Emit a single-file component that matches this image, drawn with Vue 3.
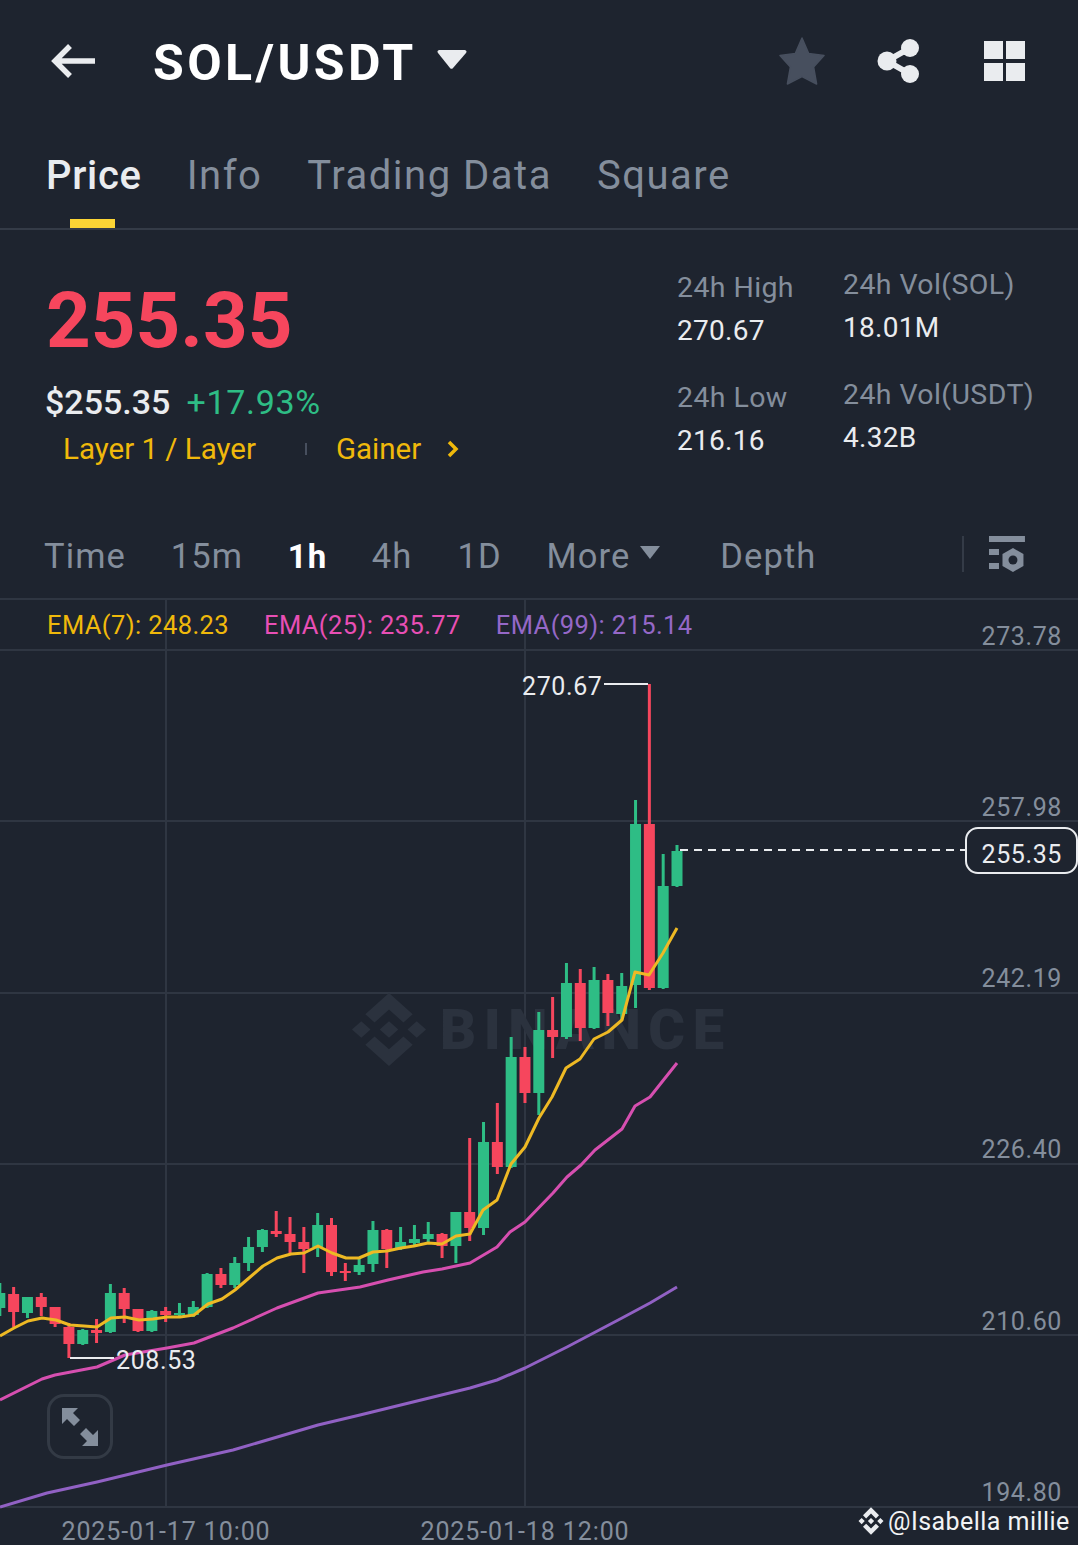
<script setup>
// candles: [high, top of body, bottom of body, low, colour], all in page pixels
const raw = [
  [1283, 1293, 1308, 1316, 'g'], [1287, 1294, 1312, 1327, 'r'], [1297, 1297, 1313, 1318, 'g'], [1293, 1297, 1307, 1316, 'r'],
  [1307, 1307, 1324, 1327, 'r'], [1323, 1327, 1344, 1358, 'r'], [1329, 1330, 1344, 1345, 'g'], [1319, 1330, 1333, 1343, 'r'],
  [1284, 1293, 1332, 1333, 'g'], [1288, 1293, 1309, 1323, 'r'], [1309, 1309, 1331, 1332, 'r'], [1310, 1311, 1331, 1332, 'g'],
  [1307, 1311, 1315, 1322, 'r'], [1303, 1313, 1315, 1318, 'g'], [1301, 1307, 1315, 1317, 'g'], [1273, 1274, 1307, 1308, 'g'],
  [1268, 1274, 1285, 1288, 'r'], [1257, 1263, 1285, 1288, 'g'], [1237, 1247, 1263, 1271, 'g'], [1229, 1230, 1247, 1252, 'g'],
  [1211, 1231, 1234, 1237, 'r'], [1217, 1234, 1242, 1253, 'r'], [1227, 1242, 1249, 1273, 'r'], [1213, 1225, 1247, 1257, 'g'],
  [1218, 1225, 1272, 1276, 'r'], [1263, 1271, 1273, 1281, 'r'], [1257, 1265, 1272, 1275, 'g'], [1221, 1230, 1264, 1272, 'g'],
  [1229, 1230, 1249, 1268, 'r'], [1227, 1242, 1248, 1250, 'g'], [1225, 1239, 1243, 1245, 'g'], [1222, 1234, 1239, 1242, 'g'],
  [1233, 1234, 1246, 1258, 'r'], [1212, 1212, 1246, 1263, 'g'], [1138, 1212, 1228, 1241, 'r'], [1122, 1142, 1228, 1235, 'g'],
  [1103, 1142, 1167, 1174, 'r'], [1037, 1057, 1167, 1168, 'g'], [1047, 1057, 1093, 1103, 'r'], [1012, 1030, 1093, 1115, 'g'],
  [997, 1030, 1037, 1058, 'r'], [963, 983, 1037, 1039, 'g'], [969, 983, 1028, 1041, 'r'], [967, 980, 1028, 1029, 'g'],
  [974, 980, 1013, 1026, 'r'], [973, 986, 1014, 1020, 'g'], [800, 824, 985, 1008, 'g'], [684, 824, 988, 990, 'r'],
  [854, 886, 988, 989, 'g'], [845, 851, 886, 887, 'g'],
]

const candles = raw.map((c, i) => ({
  x: 677 - 13.82 * (49 - i),
  high: c[0],
  top: c[1],
  bottom: c[2],
  low: c[3],
  color: c[4] === 'g' ? '#2ebd85' : '#f6465d',
}))

const ema7 = '0,1336 14,1328 28,1321 42,1318 56,1320 70,1325 84,1326 97,1327 111,1318 125,1317 139,1320 153,1319 167,1317 180,1317 194,1315 208,1304 222,1299 235,1290 249,1278 263,1266 277,1258 291,1254 304,1253 318,1246 332,1253 346,1258 359,1258 373,1252 387,1251 401,1248 414,1246 428,1243 442,1244 456,1236 470,1234 483,1210 497,1200 511,1164 525,1147 539,1118 552,1097 566,1068 580,1059 594,1039 608,1032 622,1020 635,972 649,975 663,953 677,928'
const ema25 = '0,1400 42,1379 55,1375 97,1367 125,1355 167,1348 194,1343 233,1328 277,1308 318,1293 360,1287 388,1280 423,1272 442,1269 470,1263 497,1247 510,1232 525,1222 553,1193 567,1177 581,1165 595,1150 622,1129 635,1106 650,1097 677,1063'
const ema99 = '0,1507 47,1493 97,1482 167,1465 233,1450 318,1425 360,1415 470,1388 497,1380 525,1368 567,1347 622,1318 650,1303 677,1287'

const gridY = [650, 821, 993, 1164, 1335, 1507]
const axis = [
  { y: 645, label: '273.78' },
  { y: 816, label: '257.98' },
  { y: 987, label: '242.19' },
  { y: 1158, label: '226.40' },
  { y: 1330, label: '210.60' },
  { y: 1501, label: '194.80' },
]
const logoPath = 'M12 9.5 14.5 12 12 14.5 9.5 12ZM4.5 9.5 7 12 4.5 14.5 2 12ZM19.5 9.5 22 12 19.5 14.5 17 12ZM12 1 18.4 7.4 15.9 9.9 12 6 8.1 9.9 5.6 7.4ZM12 23 18.4 16.6 15.9 14.1 12 18 8.1 14.1 5.6 16.6Z'
</script>

<template>
  <div class="page">
    <header class="top">
      <svg class="back" width="46" height="36" viewBox="0 0 46 36">
        <path d="M44 18H5M19 3 4 18l15 15" fill="none" stroke="#eaecef" stroke-width="5.5" />
      </svg>
      <span class="pair">SOL/USDT</span>
      <svg class="caret" width="30" height="22" viewBox="0 0 30 22"><path d="M2 2h26a2 2 0 0 1 1 3L16 20a2 2 0 0 1-3 0L1 5a2 2 0 0 1 1-3Z" fill="#eaecef" /></svg>
      <div class="top-icons">
        <svg class="star" width="46" height="48" viewBox="0 0 46 48"><path d="M23 1l6.6 15.4L45 18.6 34.6 30l3 17L23 39.6 8.400 47l3-17L1 18.600l15.400-2.200Z" fill="#474f5e" stroke="#474f5e" stroke-linejoin="round" stroke-width="1.500" /></svg>
        <svg class="share" width="44" height="46" viewBox="0 0 44 46">
          <path d="M33 10 10 23l23 13" fill="none" stroke="#eaecef" stroke-width="6" />
          <circle cx="33" cy="10" r="9" fill="#eaecef" /><circle cx="10" cy="23" r="9.500" fill="#eaecef" /><circle cx="33" cy="36" r="9" fill="#eaecef" />
        </svg>
        <svg width="41" height="40" viewBox="0 0 41 40">
          <path d="M0 0h19v18H0ZM22 0h19v18H22ZM0 22h19v18H0ZM22 22h19v18H22Z" fill="#eaecef" />
        </svg>
      </div>
    </header>

    <nav class="tabs">
      <a class="tab active">Price</a>
      <a class="tab">Info</a>
      <a class="tab">Trading Data</a>
      <a class="tab">Square</a>
    </nav>

    <section class="stats">
      <div class="main-price">
        <div class="last">255.35</div>
        <div class="fiat"><span>$255.35</span><span class="pct">+17.93%</span></div>
        <div class="chips">
          <span>Layer 1 / Layer</span>
          <i class="tick"></i>
          <span>Gainer</span>
          <svg width="12" height="18" viewBox="0 0 12 18"><path d="M2 2l7 7-7 7" fill="none" stroke="#f0b90b" stroke-width="3.500" /></svg>
        </div>
      </div>
      <div class="col col-a">
        <div class="lbl">24h High</div><div class="val">270.67</div>
        <div class="lbl lower">24h Low</div><div class="val">216.16</div>
      </div>
      <div class="col col-b">
        <div class="lbl">24h Vol(SOL)</div><div class="val">18.01M</div>
        <div class="lbl lower">24h Vol(USDT)</div><div class="val">4.32B</div>
      </div>
    </section>

    <div class="intervals">
      <span class="t-time">Time</span>
      <span class="t-15">15m</span>
      <span class="t-1h">1h</span>
      <span class="t-4h">4h</span>
      <span class="t-1d">1D</span>
      <span class="t-more">More</span>
      <svg class="more-caret" width="20" height="14" viewBox="0 0 20 14"><path d="M0 0h20L10 13Z" fill="#848e9c" /></svg>
      <span class="t-depth">Depth</span>
      <i class="divider"></i>
      <svg class="settings" width="36" height="36" viewBox="0 0 36 36">
        <path d="M0 0h36v6H0ZM0 13h10v6H0ZM0 27h10v6H0Z" fill="#848e9c" />
        <path d="M24 12l10.500 6v12L24 36l-10.500-6V18Z" fill="#848e9c" />
        <circle cx="24" cy="24" r="4.500" fill="#1e242f" />
      </svg>
    </div>

    <div class="chart">
      <svg class="plot" width="1078" height="945" viewBox="0 600 1078 945">
        <g stroke="#2f3642" stroke-width="2">
          <line v-for="y in gridY" :key="y" x1="0" x2="1078" :y1="y" :y2="y" />
          <line x1="166" x2="166" y1="600" y2="1507" />
          <line x1="525" x2="525" y1="600" y2="1507" />
        </g>

        <g fill="#2b323e">
          <path :d="logoPath" transform="translate(344.6 989.6) scale(3.700 3.320)" />
          <text x="440" y="1049" class="wm">BINANCE</text>
        </g>

        <polyline :points="ema99" class="line" stroke="#9161c4" />
        <polyline :points="ema25" class="line" stroke="#d64fb0" />

        <g v-for="(c, i) in candles" :key="i" :fill="c.color">
          <rect :x="c.x - 1.500" :y="c.high" width="3" :height="c.low - c.high" />
          <rect :x="c.x - 5.500" :y="c.top" width="11" :height="c.bottom - c.top" />
        </g>

        <polyline :points="ema7" class="line" stroke="#eeb924" />

        <path d="M604 684H648M70 1358H114" stroke="#eaecef" stroke-width="2" fill="none" />
        <text x="522" y="695" class="mark">270.67</text>
        <text x="116" y="1369" class="mark">208.53</text>

        <line x1="680" x2="966" y1="850" y2="850" stroke="#eaecef" stroke-width="2" stroke-dasharray="8 6" />
        <rect x="966" y="828" width="111" height="45" rx="12" fill="#1e242f" stroke="#eaecef" stroke-width="2" />
        <text x="1062" y="863" class="axis" fill="#eaecef">255.35</text>

        <text v-for="a in axis" :key="a.label" x="1062" :y="a.y" class="axis" fill="#848e9c">{{ a.label }}</text>

        <text x="166" y="1540" class="time">2025-01-17 10:00</text>
        <text x="525" y="1540" class="time">2025-01-18 12:00</text>

        <path :d="logoPath" fill="#eaecef" transform="translate(856 1506) scale(1.250)" />
        <text x="888" y="1530" class="credit">@Isabella millie</text>
      </svg>

      <div class="legend">
        <span class="ema7">EMA(7): 248.23</span>
        <span class="ema25">EMA(25): 235.77</span>
        <span class="ema99">EMA(99): 215.14</span>
      </div>

      <button class="expand">
        <svg width="40" height="40" viewBox="0 0 40 40">
          <path d="M2 1h16l-5 5 7 7-6 6-7-7-5 5ZM38 39H22l5-5-7-7 6-6 7 7 5-5Z" fill="#848e9c" />
        </svg>
      </button>
    </div>
  </div>
</template>

<style>
html,
body {
  margin: 0;
  background: #1e242f;
}
</style>

<style scoped>
.page {
  width: 1078px;
  height: 1545px;
  overflow: hidden;
  background: #1e242f;
  color: #eaecef;
  font-family: Roboto, "Liberation Sans", sans-serif;
}

.top {
  display: flex;
  align-items: center;
  height: 122px;
  padding: 0 53px 0 51px;
  box-sizing: border-box;
}

.back {
  margin-right: 56px;
}

.pair {
  position: relative;
  top: 2px;
  font-size: 50px;
  font-weight: 700;
  letter-spacing: 3.400px;
  color: #fff;
}

.caret {
  margin: 0 0 4px 20px;
}

.top-icons {
  display: flex;
  align-items: center;
  margin-left: auto;
}

.star {
  margin-right: 52px;
}

.share {
  margin-right: 63px;
}

.tabs {
  display: flex;
  gap: 45px;
  height: 108px;
  padding: 29px 0 0 46px;
  box-sizing: border-box;
  border-bottom: 2px solid #343b47;
}

.tab {
  position: relative;
  font-size: 40px;
  line-height: 50px;
  letter-spacing: 1.500px;
  color: #848e9c;
}

.tab.active {
  color: #eaecef;
  font-weight: 500;
  letter-spacing: 0.700px;
}

.tab.active::after {
  content: "";
  position: absolute;
  left: 24px;
  top: 68px;
  width: 45px;
  height: 9px;
  background: #fcd535;
}

.stats {
  position: relative;
  display: flex;
  height: 288px;
  box-sizing: border-box;
  padding: 0 0 0 46px;
}

.main-price {
  width: 631px;
}

.last {
  margin-top: 46px;
  font-size: 78px;
  line-height: 90px;
  font-weight: 700;
  color: #f6465d;
}

.fiat {
  display: flex;
  gap: 16px;
  margin: 16px 0 0 -1px;
  font-size: 34px;
  line-height: 40px;
  font-weight: 500;
}

.pct {
  color: #2ebd85;
  font-weight: 400;
  letter-spacing: 0.700px;
}

.chips {
  display: flex;
  align-items: center;
  margin: 7px 0 0 17px;
  font-size: 29.500px;
  line-height: 40px;
  color: #f0b90b;
}

.tick {
  width: 2px;
  height: 12px;
  margin: 0 29px 0 49px;
  background: #474f5e;
}

.chips svg {
  margin-left: 26px;
}

.col {
  font-size: 28.500px;
  line-height: 40px;
}

.col-a {
  width: 166px;
  margin-top: 38px;
}

.col-b {
  margin-top: 35px;
}

.lbl {
  color: #848e9c;
  white-space: nowrap;
  letter-spacing: 0.400px;
}

.val {
  margin-top: 3px;
  color: #eaecef;
  font-size: 28px;
  letter-spacing: 0.300px;
}

.lower {
  margin-top: 27px;
}

.intervals {
  display: flex;
  align-items: center;
  height: 82px;
  box-sizing: border-box;
  padding: 0 53px 4px 44px;
  border-bottom: 2px solid #2f3642;
  font-size: 34.500px;
  letter-spacing: 1.100px;
  color: #848e9c;
}

.t-time { width: 127px; }
.t-15 { width: 117px; }
.t-1h { width: 84px; color: #fff; font-weight: 700; font-size: 33px; }
.t-4h { width: 86px; }
.t-1d { width: 89px; }
.t-more { width: 94px; }
.more-caret { margin: 0 60px 6px 0; }
.t-depth { width: 242px; }

.divider {
  width: 2px;
  height: 36px;
  margin: -4px 25px 0 0;
  background: #343b47;
}

.settings {
  margin-top: -4px;
}

.chart {
  position: relative;
  height: 945px;
}

.plot {
  display: block;
}

.line {
  fill: none;
  stroke-width: 3;
  stroke-linejoin: round;
}

.wm {
  font-size: 56px;
  font-weight: 900;
  letter-spacing: 7.600px;
}

.mark {
  font-size: 25px;
  fill: #eaecef;
  letter-spacing: 0.600px;
}

.axis {
  font-size: 25px;
  text-anchor: end;
  letter-spacing: 0.600px;
}

.time {
  font-size: 25px;
  fill: #848e9c;
  text-anchor: middle;
  letter-spacing: 0.900px;
}

.credit {
  font-size: 25px;
  fill: #f2f3f5;
  letter-spacing: 0.450px;
}

.legend {
  position: absolute;
  left: 47px;
  top: 8px;
  display: flex;
  gap: 35px;
  font-size: 25.500px;
  line-height: 34px;
  letter-spacing: 0.400px;
}

.ema7 { color: #f0b90b; }
.ema25 { color: #e84fb5; }
.ema99 { color: #9568c8; }

.expand {
  position: absolute;
  left: 47px;
  top: 794px;
  width: 66px;
  height: 65px;
  padding: 0;
  display: flex;
  align-items: center;
  justify-content: center;
  box-sizing: border-box;
  background: transparent;
  border: 3px solid #333a45;
  border-radius: 17px;
}
</style>
